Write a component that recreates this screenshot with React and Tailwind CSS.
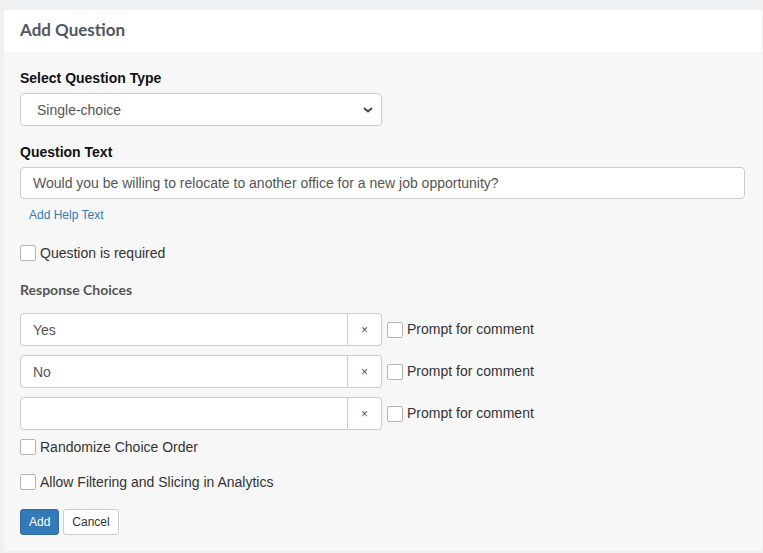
import React from "react";

function Check({ label, className = "" }) {
  return (
    <label className={`flex items-center h-5 ${className}`}>
      <span className="w-4 h-4 bg-white border border-[#b5b5b5] rounded-[2px] shrink-0" />
      <span className="ml-1 text-[14px] text-[#333]">{label}</span>
    </label>
  );
}

function Choice({ value }) {
  return (
    <div className="flex items-center h-[33px]">
      <div className="flex w-[362px] h-[33px]">
        <div className="flex-1 h-full bg-white border border-[#ccc] rounded-l-[4px] flex items-center pl-3 pt-[1px] text-[14px] text-[#555]">
          {value}
        </div>
        <div className="w-[34px] h-full bg-white border border-l-0 border-[#ccc] rounded-r-[4px] flex items-center justify-center pt-[1px] text-[12px] text-[#555]">
          ×
        </div>
      </div>
      <Check label="Prompt for comment" className="ml-[5px]" />
    </div>
  );
}

export default function App() {
  return (
    <div className="w-[763px] h-[553px] bg-[#f0f1f3] pt-[10px] pl-[4px] pr-[1px]" style={{ fontFamily: '"Liberation Sans", Arial, sans-serif' }}>
      <div className="w-[758px] h-[541px] bg-[#f7f7f7] rounded-[3px] overflow-hidden">
        <div className="h-[42px] bg-white flex items-center pl-4">
          <h1 className="text-[17px] leading-[22px] font-bold text-[#4f5660] pb-[3px]" style={{ fontFamily: 'Lato, sans-serif' }}>
            Add Question
          </h1>
        </div>
        <div className="pl-4 pr-[17px] pt-4 flex flex-col">
          <div className="h-5 leading-5 text-[14px] font-bold text-[#111]">Select Question Type</div>
          <div className="mt-[5px] w-[362px] h-[33px] bg-white border border-[#ccc] rounded-[4px] flex items-center justify-between pl-4 pr-[6px]">
            <span className="text-[14px] text-[#555] pt-[2px]">Single-choice</span>
            <svg width="12" height="8" viewBox="0 0 12 8" className="mr-[1px]">
              <path d="M2 2 L6 5.5 L10 2" fill="none" stroke="#444" strokeWidth="2" />
            </svg>
          </div>
          <div className="mt-4 h-5 leading-5 text-[14px] font-bold text-[#111]">Question Text</div>
          <div className="mt-[5px] h-[32px] bg-white border border-[#ccc] rounded-[4px] flex items-center pl-3 pt-[1px] text-[14px] text-[#555]">
            Would you be willing to relocate to another office for a new job opportunity?
          </div>
          <div className="mt-[7px] h-[18px] leading-[18px] pl-[9px] text-[12px] text-[#337ab7]">Add Help Text</div>
          <Check label="Question is required" className="mt-[19px]" />
          <div className="mt-[17px] h-5 leading-5 text-[14px] font-bold text-[#555]" style={{ fontFamily: 'Lato, sans-serif' }}>
            Response Choices
          </div>
          <div className="mt-[13px] flex flex-col gap-[9px]">
            <Choice value="Yes" />
            <Choice value="No" />
            <Choice value="" />
          </div>
          <Check label="Randomize Choice Order" className="mt-[7px]" />
          <Check label="Allow Filtering and Slicing in Analytics" className="mt-[15px]" />
          <div className="mt-[17px] flex gap-[4px]">
            <button className="h-[26px] px-2 bg-[#337ab7] border border-[#2e6da4] rounded-[3px] text-white text-[12px]">Add</button>
            <button className="h-[26px] px-2 bg-white border border-[#ccc] rounded-[3px] text-[#333] text-[12px]">Cancel</button>
          </div>
        </div>
      </div>
    </div>
  );
}
